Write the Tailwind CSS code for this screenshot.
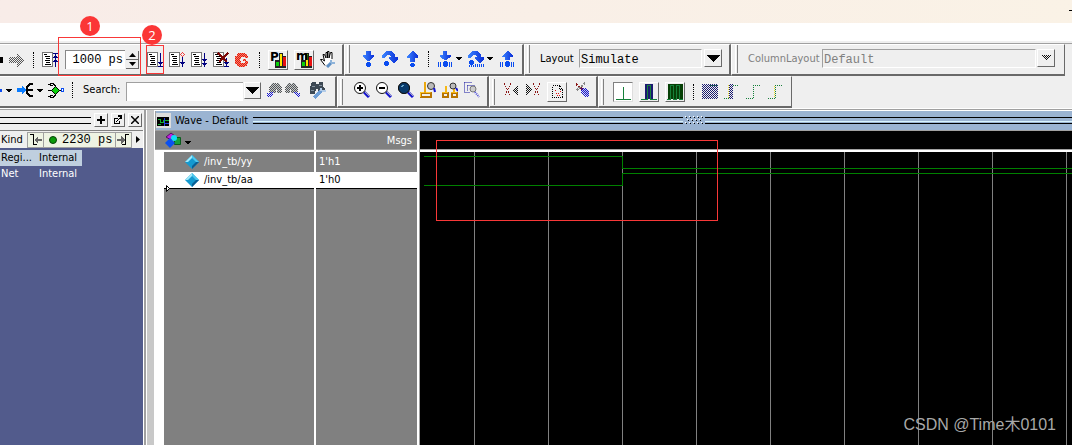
<!DOCTYPE html>
<html lang="en">
<head>
<meta charset="utf-8">
<title>Wave - Default</title>
<script src="https://cdn.jsdelivr.net/npm/@tailwindcss/browser@4"></script>
</head>
<body class="bg-[#efefef] font-['DejaVu_Sans_Condensed','Noto_Sans',sans-serif] text-[11px] leading-4 text-black">

<svg width="0" height="0" class="absolute" aria-hidden="true" shape-rendering="crispEdges">
  <defs>
    <pattern id="chkBlack" width="2" height="2" patternUnits="userSpaceOnUse"><path fill="#111" d="M0 0h1v1H0zM1 1h1v1H1z"/></pattern>
    <pattern id="chkGray" width="2" height="2" patternUnits="userSpaceOnUse"><path fill="#555" d="M0 0h1v1H0zM1 1h1v1H1z"/></pattern>
    <pattern id="chkNavy" width="2" height="2" patternUnits="userSpaceOnUse"><path fill="#1a1a70" d="M0 0h1v1H0zM1 1h1v1H1z"/></pattern>
    <pattern id="chkBlue" width="2" height="2" patternUnits="userSpaceOnUse"><path fill="#1515d0" d="M0 0h1v1H0zM1 1h1v1H1z"/></pattern>
    <pattern id="chkRed" width="2" height="2" patternUnits="userSpaceOnUse"><path fill="#f08070" d="M0 0h2v2H0z"/><path fill="#e81808" d="M0 0h1v1H0zM1 1h1v1H1z"/></pattern>
    <pattern id="grip" width="4" height="6" patternUnits="userSpaceOnUse"><path fill="#fff" d="M0 0h1v1H0zM2 3h1v1H2z"/><path fill="#000" d="M1 1h1v1H1zM3 4h1v1H3z"/></pattern>
    <linearGradient id="blueFill" x1="0" x2="1"><stop offset="0" stop-color="#3d86ff"/><stop offset="1" stop-color="#0a2fd8"/></linearGradient>
  </defs>
  <symbol id="page" viewBox="0 0 16 16">
    <path fill="#fff" stroke="#777" d="M.5 .5h10v14H.5z"/>
    <path stroke="#000" d="M2 2.5h3M3 4.5h5M4 6.5h4M3 8.5h5M4 10.5h4M3 12.5h6"/>
  </symbol>
  <symbol id="run" viewBox="0 0 16 16"><use href="#page"/><path fill="#000080" d="M13 1h1v13h-1zM11 10h5v1h-1v1h-1v1h-1v-1h-1v-1h-1zM11 14h5v1h-5z"/></symbol>
  <symbol id="cont" viewBox="0 0 16 16"><use href="#page"/><path fill="#000080" d="M13 5h1v10h-1zM11 10h5v1h-1v1h-1v1h-1v-1h-1v-1h-1z"/><path fill="#f04040" d="M13 0h1v1h-1zM12 1h1v1h-1zM14 1h1v1h-1zM11 2h1v1h-1zM15 2h1v1h-1zM12 3h1v1h-1zM14 3h1v1h-1zM13 4h1v1h-1z"/></symbol>
  <symbol id="runall" viewBox="0 0 16 16"><use href="#page"/><path fill="#000080" d="M13 1h1v14h-1zM11 7h5v1h-1v1h-3V8h-1zM11 11h5v1h-1v1h-1v1h-1v-1h-1v-1h-1z"/></symbol>
  <symbol id="breakx" viewBox="0 0 16 16"><use href="#page"/><path fill="#000080" d="M13 6h1v9h-1zM11 10h5v1h-1v1h-1v1h-1v-1h-1v-1h-1zM11 14h5v1h-5z"/><path fill="none" stroke="#7b0808" stroke-width="2" d="M5 1l9 9M15 1l-9 9"/></symbol>
  <symbol id="restart" viewBox="0 0 18 16"><path fill="#fff" stroke="#777" d="M.5 .5h10v14H.5z"/><path stroke="#000" d="M2 2.5h3M3 4.5h5M4 6.5h4M3 8.5h5M4 10.5h4M3 12.5h6"/><path fill="#000080" d="M13 1h1v14h-1zM11 1h6v1h-6zM12 4h3v1h-3zM11 5h5v1h-5zM12 8h3v1h-3zM11 9h5v1h-5z"/></symbol>
  <symbol id="stop" viewBox="0 0 16 16"><path fill="url(#chkRed)" d="M3 1h7v1h2v2h1v2h-3V5H6v2H5v2h1v2h4V9h3v3h-1v2h-2v1H4v-1H2v-2H0V4h2V2h1zM8 7h3v2H8z"/></symbol>
  <symbol id="meter" viewBox="0 0 18 18"><path fill="#222" d="M6 9h4V2h4v3h3v12H6z"/><path fill="#0bd00b" d="M7 11h3v4H7z"/><path fill="#ffe600" d="M11 3h2v12h-2z"/><path fill="#e81010" d="M14 6h3v9h-3z"/></symbol>
  <symbol id="hand" viewBox="0 0 16 17"><path fill="#fff" stroke="#000" d="M5 14.5L.5 8.500h2L4.500 10 3 3.500h1.500L6 7V1.500h1.500V7 .5H9V7l1.500-5.500H12V8"/><path fill="#fff" d="M5 9h7v4H6z"/><path stroke="#5d8fc4" stroke-width="3" d="M7 16l5-5"/><path stroke="#8fb4da" stroke-width="2" d="M11 12V9M11 12h4"/></symbol>
  <symbol id="down" viewBox="0 0 16 16"><path fill="url(#blueFill)" d="M6 0h5v4h3v2L9 10H8L3 6V4h3z"/><path fill="#0a4cf0" d="M7 11h3v1h1v3h-1v1H7v-1H6v-3h1z"/></symbol>
  <symbol id="up" viewBox="0 0 16 16"><path fill="url(#blueFill)" d="M8 0h1l5 5v2h-3v4H6V7H3V5z"/><path fill="#0a4cf0" d="M7 12h3v1h1v2h-1v1H7v-1H6v-2h1z"/></symbol>
  <symbol id="over" viewBox="0 0 16 16"><path fill="url(#blueFill)" d="M0 7V4l4-4h5l4 4v2h3v2l-4 4h-1L7 8V6h2L7 4H5L2 7z"/><path fill="#0a4cf0" d="M3 10h3v1h1v3H6v1H3v-1H2v-3h1z"/></symbol>
  <symbol id="downd" viewBox="0 0 16 16"><path fill="url(#blueFill)" d="M6 0h4v4h4v2L9 9H8L3 6V4h3z"/><path fill="#0a4cf0" d="M1 11h1v5H1zM3 11h1v5H3zM7 10h3v1h1v4h-1v1H7v-1H6v-4h1zM12 11h1v5h-1zM14 11h1v5h-1z"/></symbol>
  <symbol id="upd" viewBox="0 0 16 16"><path fill="url(#blueFill)" d="M8 0h1l5 5v1h-3v3H6V6H3V5z"/><path fill="#0a4cf0" d="M1 11h1v5H1zM3 11h1v5H3zM7 10h3v1h1v4h-1v1H7v-1H6v-4h1zM12 11h1v5h-1zM14 11h1v5h-1z"/></symbol>
  <symbol id="overd" viewBox="0 0 16 16"><path fill="url(#blueFill)" d="M0 7V4l4-4h5l4 4v2h3v2l-4 4h-1L7 8V6h2L7 4H5L2 7z"/><path fill="#0a4cf0" d="M2 9h3v1h1v3H5v1H2v-1H1v-3h1zM1 14h1v2H1zM3 14h1v2H3zM5 14h1v2H5zM7 13h1v3H7zM9 13h1v3H9zM11 13h1v3h-1zM13 13h1v3h-1zM15 13h1v3h-1z"/></symbol>
  <symbol id="tri" viewBox="0 0 6 3"><path d="M0 0h6v1H5v1H4v1H2V2H1V1H0z"/></symbol>
  <symbol id="bigtri" viewBox="0 0 13 7"><path d="M0 0h13v1h-1v1h-1v1h-1v1H9v1H8v1H7v1H6V6H5V5H4V4H3V3H2V2H1V1H0z"/></symbol>
  <symbol id="lens" viewBox="0 0 16 16"><path stroke="#1515d0" stroke-width="3" d="M10 10l5 5"/><path stroke="#aab" d="M11 10l4 4"/><circle cx="6" cy="6" r="5.500" fill="#fff" stroke="#111"/></symbol>
  <symbol id="zin" viewBox="0 0 16 16"><use href="#lens"/><path fill="#000" d="M5 3h2v2h2v2H7v2H5V7H3V5h2z"/></symbol>
  <symbol id="zout" viewBox="0 0 16 16"><use href="#lens"/><path fill="#000" d="M3 5h6v2H3z"/></symbol>
  <symbol id="zfull" viewBox="0 0 16 16"><use href="#lens"/><circle cx="6" cy="6" r="5.500" fill="#093a6b" stroke="#111"/><path stroke="#6aa6c8" d="M3 4.500h2M4 3.500h2"/></symbol>
  <symbol id="zcur" viewBox="0 0 16 16"><path fill="none" stroke="#b87400" stroke-width="2" d="M1 11h10v4H1z"/><path fill="none" stroke="#ffc928" d="M.5 15v-4.500h10"/><path fill="#eba80f" d="M4 0h2v11H4z"/><circle cx="11" cy="4" r="3.500" fill="#bbb" stroke="#333"/><path stroke="#1515d0" stroke-width="2" d="M14 6l1 4"/></symbol>
  <symbol id="zcur2" viewBox="0 0 16 16"><path fill="none" stroke="#b87400" stroke-width="2" d="M1 11h5v4H1zM10 11h5v4h-5z"/><path fill="#f5b818" d="M3 4h2v7H3zM11 6h2v5h-2zM0 10h6v1H0zM9 10h6v1H9z"/><circle cx="11" cy="4" r="3" fill="#bbb" stroke="#333"/><path stroke="#1515d0" stroke-width="2" d="M14 6l2 3"/></symbol>
  <symbol id="zarea" viewBox="0 0 16 16"><path fill="none" stroke="#1515a0" stroke-dasharray="1 1" d="M.5 .5h8M.5 .5v10h5M3.500 3.500h8M3.500 3.500v6"/><circle cx="9" cy="7" r="3" fill="#ccc" stroke="#777"/><path stroke="#4a4ad8" stroke-width="2" stroke-dasharray="1 1" d="M11 10l4 5"/></symbol>
  <symbol id="bino" viewBox="0 0 16 16"><path fill="#c3c9cc" d="M6 1h3l1 1 1-1h2l2 4v6h-4V7h-1v4H6l-2-1V6z"/><path fill="url(#chkGray)" d="M6 1h3l1 1 1-1h2l3 5v5h-5V7h-1v4H6l-3-1V6z"/><path fill="url(#chkBlue)" d="M4 10h3v2l-3 3H1v-3H0v-1h4z"/></symbol>
  <symbol id="drive" viewBox="0 0 16 16"><path fill="#0a7cff" d="M0 6h5V4l5 4-5 4v-2H0z"/><path fill="none" stroke="#000" stroke-width="2" d="M16 2h-3l-3 3v6l3 3h3M10 8h6"/></symbol>
  <symbol id="gates" viewBox="0 0 16 16"><path fill="none" stroke="#000" d="M0 2.500h3M0 8.500h5M0 14.500h3M10 8.500h4"/><path fill="none" stroke="#000" d="M2 1.500h3l2 2v2M2 1.500v2h3M2 15.500h3l2-2v-2M2 15.500v-2h3"/><path fill="#0bd00b" stroke="#000" d="M7.500 4.500l4 4-4 4-4-4z"/><path fill="#fff" stroke="#0a4cf0" d="M13.500 6.500h2v3h-2z"/></symbol>
  <symbol id="cut" viewBox="0 0 16 16"><path fill="none" stroke="#8b1414" stroke-dasharray="2 1" d="M1 1l7 14M8 1L1 15"/><path fill="url(#chkBlack)" d="M9 8l6-6v12z"/></symbol>
  <symbol id="diamond" viewBox="0 0 14 14"><path fill="#1499cf" d="M7 0l7 7-7 7-7-7z"/><path fill="#9de9fb" d="M7 0v3L3 7H0z"/><path fill="#4cc8ee" d="M7 0v3l4 4h3z"/><path fill="#0b5e93" d="M7 14v-3l4-4h3z"/></symbol>
</svg>

<div class="relative flex min-h-screen flex-col overflow-hidden">
  <header class="flex h-[23px] shrink-0 justify-end bg-linear-to-r from-[#f8ece8] to-[#faf2e6] pt-2.5"><span class="h-px w-[3px] bg-black"></span></header>
  <div class="h-[18px] shrink-0 bg-white"></div>
  <div class="h-0.5 shrink-0"></div>
  <div class="h-px shrink-0 bg-[#a0a0a0]"></div>

  <!-- Toolbars, first row -->
  <div class="flex h-8 shrink-0">
    <section class="flex w-[344px] shrink-0 items-center border-t border-r-2 border-b-2 border-t-white border-r-[#696969] border-b-[#696969]" aria-label="Simulate">
      <svg class="h-4 w-[3px]" shape-rendering="crispEdges"><path d="M0 5h3v6H0z"/></svg>
      <button class="ml-1.5" aria-label="Forward"><svg class="size-4" shape-rendering="crispEdges"><path fill="url(#chkGray)" d="M0 5h8V1l8 7-8 7v-4H0z"/></svg></button>
      <span class="ml-2 h-4 border-l border-dotted border-black"></span>
      <button class="ml-2" aria-label="Restart"><svg class="h-4 w-[18px]" shape-rendering="crispEdges"><use href="#restart"/></svg></button>
      <input aria-label="Run length" value="1000 ps" class="ml-[5px] h-[19px] w-[60px] border-t border-l border-[#888] bg-white pr-0.5 text-right font-['Liberation_Mono',monospace] text-[12px]">
      <div class="ml-px flex w-[13px] flex-col">
        <button aria-label="Increase" class="flex h-[9px] items-center justify-center border-r border-b border-[#696969]"><svg width="7" height="4"><path d="M0 4l3.500-4L7 4z"/></svg></button>
        <button aria-label="Decrease" class="flex h-[9px] items-center justify-center border-r border-b border-[#696969]"><svg width="7" height="4"><path d="M0 0l3.500 4L7 0z"/></svg></button>
      </div>
      <div class="ml-2 flex gap-1.5">
        <button aria-label="Run"><svg class="size-4" shape-rendering="crispEdges"><use href="#run"/></svg></button>
        <button aria-label="Continue run"><svg class="size-4" shape-rendering="crispEdges"><use href="#cont"/></svg></button>
        <button aria-label="Run all"><svg class="size-4" shape-rendering="crispEdges"><use href="#runall"/></svg></button>
        <button aria-label="Break"><svg class="size-4" shape-rendering="crispEdges"><use href="#breakx"/></svg></button>
        <button aria-label="Stop"><svg class="size-4" shape-rendering="crispEdges"><use href="#stop"/></svg></button>
      </div>
      <span class="ml-2 h-4 border-l border-dotted border-black"></span>
      <div class="ml-2 flex items-center gap-1.5">
        <button aria-label="Performance profiling" class="size-5 border border-t-white border-r-[#696969] border-b-[#696969] border-l-white"><svg class="size-[18px]" shape-rendering="crispEdges"><use href="#meter"/><text x="1" y="10" font-family="DejaVu Sans" font-weight="bold" font-size="12">P</text></svg></button>
        <button aria-label="Memory profiling" class="size-5 border border-t-white border-r-[#696969] border-b-[#696969] border-l-white"><svg class="size-[18px]" shape-rendering="crispEdges"><use href="#meter"/><text x="1" y="9" font-family="DejaVu Sans" font-weight="bold" font-size="12">m</text></svg></button>
        <button aria-label="Edit"><svg class="h-[17px] w-4"><use href="#hand"/></svg></button>
      </div>
    </section>

    <section class="flex w-[180px] shrink-0 items-center border-t border-r-2 border-b-2 border-l border-t-white border-r-[#696969] border-b-[#696969] border-l-white pb-0.5" aria-label="Step">
      <span class="ml-0.5 h-7 w-[3px] shrink-0 border-r border-l border-r-[#808080] border-l-white"></span>
      <div class="ml-2.5 flex gap-1.5">
        <button aria-label="Step into"><svg class="size-4" shape-rendering="crispEdges"><use href="#down"/></svg></button>
        <button aria-label="Step over"><svg class="size-4" shape-rendering="crispEdges"><use href="#over"/></svg></button>
        <button aria-label="Step out"><svg class="size-4" shape-rendering="crispEdges"><use href="#up"/></svg></button>
      </div>
      <span class="ml-2 h-4 border-l border-dotted border-black"></span>
      <button class="ml-2 flex items-center gap-[3px]" aria-label="Step into current"><svg class="size-4" shape-rendering="crispEdges"><use href="#downd"/></svg><svg class="h-[3px] w-1.5" shape-rendering="crispEdges"><use href="#tri"/></svg></button>
      <button class="ml-1.5 flex items-center gap-[3px]" aria-label="Step over current"><svg class="size-4" shape-rendering="crispEdges"><use href="#overd"/></svg><svg class="h-[3px] w-1.5" shape-rendering="crispEdges"><use href="#tri"/></svg></button>
      <button class="ml-1.5" aria-label="Step out current"><svg class="size-4" shape-rendering="crispEdges"><use href="#upd"/></svg></button>
    </section>

    <section class="flex w-[207px] shrink-0 items-center border-t border-r-2 border-b-2 border-l border-t-white border-r-[#696969] border-b-[#696969] border-l-white pb-0.5" aria-label="Layout">
      <span class="ml-0.5 h-7 w-[3px] shrink-0 border-r border-l border-r-[#808080] border-l-white"></span>
      <label for="layout" class="ml-2.5 w-[39px] shrink-0">Layout</label>
      <div class="relative flex">
        <select id="layout" class="h-[19px] w-[143px] appearance-none pt-0.5 pl-0.5 font-['Liberation_Mono',monospace] text-[12px] leading-4"><option>Simulate</option></select>
        <span class="pointer-events-none absolute inset-y-0 left-0 w-[123px] border border-t-[#a0a0a0] border-r-white border-b-white border-l-[#a0a0a0]"></span>
        <span class="pointer-events-none absolute top-0 right-0 flex size-[18px] items-center justify-center border border-t-white border-r-[#696969] border-b-[#696969] border-l-white"><svg class="h-[7px] w-[13px]" shape-rendering="crispEdges"><use href="#bigtri"/></svg></span>
      </div>
    </section>

    <section class="flex w-[334px] shrink-0 items-center border-t border-r border-b-2 border-l border-t-white border-r-[#696969] border-b-[#696969] border-l-white pb-0.5 text-[#808080]" aria-label="Column layout">
      <span class="ml-[3px] h-7 w-[3px] shrink-0 border-r border-l border-r-[#808080] border-l-white"></span>
      <label for="columns" class="ml-2.5 w-[74px] shrink-0">ColumnLayout</label>
      <div class="relative flex">
        <select id="columns" disabled class="h-[19px] w-[233px] appearance-none pt-0.5 pl-0.5 font-['Liberation_Mono',monospace] text-[12px] leading-4 text-[#808080]"><option>Default</option></select>
        <span class="pointer-events-none absolute inset-y-0 left-0 w-[214px] border border-t-[#a0a0a0] border-r-white border-b-white border-l-[#a0a0a0]"></span>
        <span class="pointer-events-none absolute top-0 right-0 flex size-[18px] items-center justify-center border border-t-white border-r-[#696969] border-b-[#696969] border-l-white"><svg class="h-[7px] w-[13px]" shape-rendering="crispEdges"><path fill="url(#chkBlack)" d="M1 0h11L7 6H6z"/></svg></span>
      </div>
    </section>
  </div>

  <!-- Toolbars, second row -->
  <div class="flex h-8 shrink-0">
    <section class="flex w-[337px] shrink-0 items-start border-t border-r-2 border-b-2 border-t-white border-r-[#696969] border-b-[#696969] pt-[5px]" aria-label="Search">
      <button class="flex h-4 items-center gap-1" aria-label="Trace"><svg width="2" height="3"><path fill="#0a4cf0" d="M0 0h2v3H0z"/></svg><svg class="h-[3px] w-1.5" shape-rendering="crispEdges"><use href="#tri"/></svg></button>
      <button class="ml-[5px] flex h-4 items-center gap-1" aria-label="Drivers"><svg class="size-4" shape-rendering="crispEdges"><use href="#drive"/></svg><svg class="h-[3px] w-1.5" shape-rendering="crispEdges"><use href="#tri"/></svg></button>
      <button class="ml-[5px]" aria-label="Fanout"><svg class="size-4" shape-rendering="crispEdges"><use href="#gates"/></svg></button>
      <span class="ml-2 h-4 border-l border-dotted border-black"></span>
      <label for="search" class="ml-2.5 w-[43px] shrink-0">Search:</label>
      <input id="search" class="h-[19px] w-[117px] border-t border-l border-[#a0a0a0] bg-white px-1">
      <button aria-label="Search history" class="ml-px flex size-[17px] items-center justify-center border border-t-white border-r-[#696969] border-b-[#696969] border-l-white"><svg class="h-[7px] w-[13px] shrink-0" shape-rendering="crispEdges"><use href="#bigtri"/></svg></button>
      <button class="ml-[5px]" aria-label="Find previous"><svg class="size-4" shape-rendering="crispEdges"><use href="#bino"/></svg></button>
      <button class="ml-[3px] -scale-x-100" aria-label="Find next"><svg class="size-4" shape-rendering="crispEdges"><use href="#bino"/></svg></button>
      <button class="ml-2" aria-label="Search options"><svg class="size-[17px]" shape-rendering="crispEdges"><path fill="#3d4954" d="M3 0h4v2h3V0h4v4l2 3v3H9V7H7l-1 5H1V6z"/><path stroke="#8593a0" d="M3 4h3M10 3h3M2 8h3"/><path stroke="#6f9fd6" stroke-width="4" d="M5 16l7-7"/><path stroke="#b3cce8" stroke-width="2" d="M12 9V6M13 9h4"/></svg></button>
    </section>

    <section class="flex w-[152px] shrink-0 items-start border-t border-r-2 border-b-2 border-l border-t-white border-r-[#696969] border-b-[#696969] border-l-white pt-[5px]" aria-label="Zoom">
      <span class="-mt-[3px] ml-0.5 h-[26px] w-[3px] shrink-0 border-r border-l border-r-[#808080] border-l-white"></span>
      <div class="ml-[11px] flex gap-1.5">
        <button aria-label="Zoom in"><svg class="size-4"><use href="#zin"/></svg></button>
        <button aria-label="Zoom out"><svg class="size-4"><use href="#zout"/></svg></button>
        <button aria-label="Zoom full"><svg class="size-4"><use href="#zfull"/></svg></button>
        <button aria-label="Zoom to cursor"><svg class="size-4"><use href="#zcur"/></svg></button>
        <button aria-label="Zoom between cursors"><svg class="size-4"><use href="#zcur2"/></svg></button>
        <button aria-label="Zoom area"><svg class="size-4"><use href="#zarea"/></svg></button>
      </div>
    </section>

    <section class="flex w-[109px] shrink-0 items-start border-t border-r-2 border-b-2 border-l border-t-white border-r-[#696969] border-b-[#696969] border-l-white pt-[5px]" aria-label="Contribution">
      <span class="-mt-[3px] ml-0.5 h-[26px] w-[3px] shrink-0 border-r border-l border-r-[#808080] border-l-white"></span>
      <button class="ml-2" aria-label="Previous X"><svg class="size-4" shape-rendering="crispEdges"><use href="#cut"/></svg></button>
      <button class="ml-1.5 -scale-x-100" aria-label="Next X"><svg class="size-4" shape-rendering="crispEdges"><use href="#cut"/></svg></button>
      <button class="ml-1.5 size-5 border border-t-white border-r-[#696969] border-b-[#696969] border-l-white" aria-label="Show X"><svg class="size-[18px]" shape-rendering="crispEdges"><path fill="none" stroke="#000" stroke-dasharray="1 1" d="M4.500 2.500h7l3 4v8h-10zM11.500 2.500v4h3"/><path stroke="#e01010" stroke-dasharray="1 1" d="M7 7.500h2M12 8.500h2M8 10.500h3M9 12.500h3"/></svg></button>
      <button class="ml-2" aria-label="Clear X"><svg class="size-4" shape-rendering="crispEdges"><path stroke="#8b1414" stroke-dasharray="2 1" stroke-width="2" d="M1 2l8 7"/><path stroke="#888" stroke-dasharray="2 1" stroke-width="2" d="M10 1L1 9"/><path fill="#c4c4ea" d="M7 7h3l4 3v4h-3L7 10z"/><path fill="url(#chkBlue)" d="M6 6h4l4 4v5h-4l-4-5z"/></svg></button>
    </section>

    <section class="flex w-[194px] shrink-0 items-start border-t border-r border-b-2 border-l border-t-white border-r-[#696969] border-b-[#696969] border-l-white pt-[5px]" aria-label="Cursor">
      <span class="-mt-[3px] ml-0.5 h-[26px] w-[3px] shrink-0 border-r border-l border-r-[#808080] border-l-white"></span>
      <div class="ml-[9px] flex gap-1.5">
        <button class="size-5 border border-t-[#808080] border-r-[#ddd] border-b-[#ddd] border-l-[#808080] bg-white" aria-label="Edge mode"><svg class="size-[18px]" shape-rendering="crispEdges"><path fill="none" stroke="#15803a" d="M2 16.500h15M9.500 4v12"/></svg></button>
        <button class="size-5 border border-t-white border-r-[#696969] border-b-[#696969] border-l-white" aria-label="Two cursor mode"><svg class="size-[18px]" shape-rendering="crispEdges"><path fill="#1a1a70" d="M5 1h8v15H5z"/><path fill="none" stroke="#15803a" d="M1 16.500h6.500v-14h3v14H17"/></svg></button>
        <button class="size-5 border border-t-white border-r-[#696969] border-b-[#696969] border-l-white" aria-label="Zoom mode"><svg class="size-[18px]" shape-rendering="crispEdges"><path fill="#064006" d="M2 1h15v15H2z"/><path fill="none" stroke="#15803a" d="M1 16.500h3.500v-14h3v14h3v-14h3v14H17"/></svg></button>
      </div>
      <span class="mt-0.5 ml-2 h-4 border-l border-dotted border-black"></span>
      <div class="mt-0.5 ml-2 flex gap-1.5">
        <button aria-label="Expand all"><svg class="size-4" shape-rendering="crispEdges"><path fill="url(#chkNavy)" d="M0 0h16v15H0z"/><path stroke="#15803a" stroke-dasharray="1 1" d="M8 1.500h7"/></svg></button>
        <button aria-label="Expand at cursor"><svg class="size-4" shape-rendering="crispEdges"><path fill="url(#chkNavy)" d="M5 0h4v15H5z"/><path stroke="#e8dc30" stroke-dasharray="1 1" d="M4.500 1v13"/><path fill="none" stroke="#15803a" stroke-dasharray="1 1" d="M0 14.500h6M9 1.500h6"/></svg></button>
        <button aria-label="Collapse all"><svg class="size-4" shape-rendering="crispEdges"><path fill="none" stroke="#15803a" stroke-dasharray="1 1" d="M0 14.500h7.500v-13h7"/></svg></button>
        <button aria-label="Collapse at cursor"><svg class="size-4" shape-rendering="crispEdges"><path fill="none" stroke="#15803a" stroke-dasharray="1 1" d="M0 14.500h7.500v-13h7"/><path stroke="#e8dc30" stroke-dasharray="1 1" d="M6.500 2v12"/></svg></button>
      </div>
    </section>
  </div>

  <div class="h-px shrink-0 bg-white"></div>
  <div class="h-px shrink-0 bg-[#a0a0a0]"></div>

  <main class="flex flex-1">
    <!-- Objects pane -->
    <aside class="flex w-[146px] shrink-0 flex-col border-r-2 border-r-[#a0a0a0] bg-white">
      <div class="flex h-5 items-center bg-[#efefef] pr-0.5">
        <div class="h-[7px] flex-1 border-y border-black"></div>
        <div class="ml-[3px] flex gap-[3px]">
          <button aria-label="Zoom pane" class="flex size-3.5 items-center justify-center border border-t-white border-r-[#696969] border-b-[#696969] border-l-white"><svg class="size-2" shape-rendering="crispEdges"><path d="M3 0h2v3h3v2H5v3H3V5H0V3h3z"/></svg></button>
          <button aria-label="Undock pane" class="flex size-3.5 items-center justify-center border border-t-white border-r-[#696969] border-b-[#696969] border-l-white"><svg class="size-2.5" shape-rendering="crispEdges"><path fill="none" stroke="#000" d="M5 3.500H1.500v5h5V6M3 7l5-5"/><path d="M5 0h4v4H7V2H5z"/></svg></button>
          <button aria-label="Close pane" class="flex size-3.5 items-center justify-center border border-t-white border-r-[#696969] border-b-[#696969] border-l-white"><svg class="size-2"><path stroke="#000" stroke-width="1.500" d="M0 0l8 8M8 0L0 8"/></svg></button>
        </div>
      </div>
      <div class="mr-px flex h-[18px] items-center border-t border-[#808080] bg-[#efefef]">
        <span class="w-[27px] pl-px">Kind</span>
        <div class="flex h-4 w-[105px] items-center border border-[#a0a0a0] bg-[#eef3e3]">
          <button aria-label="Previous event" class="h-full w-4 border-r border-[#a0a0a0]"><svg class="h-3.5 w-[15px]" shape-rendering="crispEdges"><path fill="none" stroke="#000" d="M2 1.500h3.500v10H9"/><path fill="#666" d="M6 7l4-4v3h4v2h-4v3z"/></svg></button>
          <span class="ml-[5px] size-2 rounded-full border border-[#064006] bg-[#0a9a0a]"></span>
          <span class="ml-[5px] flex-1 font-['Liberation_Mono',monospace] text-[12px] whitespace-pre">2230 ps</span>
          <button aria-label="Next event" class="h-full w-4 border-l border-[#a0a0a0]"><svg class="h-3.5 w-[15px]" shape-rendering="crispEdges"><path fill="none" stroke="#000" d="M6 11.500h3.500v-10H13"/><path fill="#666" d="M9 7L5 3v3H1v2h4v3z"/></svg></button>
        </div>
        <svg class="ml-1 h-[7px] w-1"><path d="M0 0l4 3.500L0 7z"/></svg>
      </div>
      <div class="mr-px flex-1 bg-[#525b8c] pt-0.5">
        <table class="w-[82px] table-fixed text-white">
          <tbody>
            <tr class="h-4 bg-[#bfcfdf] text-black"><td class="w-[38px] p-0 pl-px">Regi...</td><td class="p-0 pl-px">Internal</td></tr>
            <tr class="h-4"><td class="p-0 pl-px">Net</td><td class="p-0 pl-px">Internal</td></tr>
          </tbody>
        </table>
      </div>
    </aside>
    <div class="w-2 shrink-0 border-l border-white bg-[#c8c8c8]"></div>

    <!-- Wave window -->
    <section class="flex min-w-0 flex-1 flex-col border-t border-l border-white bg-white">
      <div class="flex h-[19px] items-center border-l border-[#a0a0a0] bg-[#9bb4d2]">
        <svg class="size-[15px]" shape-rendering="crispEdges"><path fill="#ddd" d="M0 0h15v15H0z"/><path d="M1 4h12v9H1z"/><path fill="none" stroke="#10b030" d="M2 6.500h2v3h3v-3M9 7.500h4M2 11.500h3"/><path stroke="#2040e0" d="M8 5v8M9 10.500h4"/></svg>
        <h1 class="ml-1 w-[78px] shrink-0">Wave - Default</h1>
        <div class="h-[7px] flex-[1.17] border-y border-black"><div class="h-1 border-b border-[#d8f4fc]"></div></div>
        <svg class="mx-0.5 h-[9px] w-[18px]" shape-rendering="crispEdges"><path fill="url(#grip)" d="M0 0h18v9H0z"/></svg>
        <div class="h-[7px] flex-1 border-y border-black"><div class="h-1 border-b border-[#d8f4fc]"></div></div>
      </div>
      <div class="flex flex-1 border-t border-[#a0a0a0]">
        <div class="flex w-[159px] shrink-0 flex-col">
          <div class="flex h-[19px] shrink-0 items-center border-b border-[#a0a0a0] bg-[#808080] pl-2.5">
            <svg class="size-4"><path fill="#c21fe0" stroke="#50105e" d="M1 5l5-4 4 3-4 4z"/><path fill="#15a03a" stroke="#0a5c1c" d="M9.500 5.500h6v7h-6z"/><circle cx="9" cy="6" r="3" fill="#12dcf5"/><path fill="#0a50f0" d="M0 11l5-5 5 5-5 5z"/></svg>
            <svg class="mt-1 ml-1 h-[3px] w-1.5" shape-rendering="crispEdges"><use href="#tri"/></svg>
          </div>
          <div class="mt-0.5 ml-[9px] flex flex-1 flex-col bg-[#808080]">
            <div class="flex h-5 items-center pl-[21px] text-white"><svg class="mr-[5px] size-3.5"><use href="#diamond"/></svg>/inv_tb/yy</div>
            <div class="relative flex h-[17px] items-center border-b border-black bg-white pl-[21px]"><svg class="mr-[5px] size-3.5"><use href="#diamond"/></svg>/inv_tb/aa
              <svg class="absolute -bottom-1 left-0.5 h-[7px] w-1"><path fill="#fff" stroke="#000" d="M.5 .5l3 3-3 3z"/></svg>
            </div>
          </div>
        </div>
        <div class="w-0.5 shrink-0"></div>
        <div class="flex w-[101px] shrink-0 flex-col">
          <div class="h-[19px] shrink-0 border-b border-[#a0a0a0] bg-[#808080] pr-[5px] pt-0.5 text-right leading-4 text-white">Msgs</div>
          <div class="mt-0.5 flex flex-1 flex-col bg-[#808080]">
            <div class="h-5 pl-[3px] leading-5 text-white">1'h1</div>
            <div class="h-[17px] border-b border-black bg-white pl-[3px]">1'h0</div>
          </div>
        </div>
        <div class="w-[3px] shrink-0 border-r border-[#a0a0a0]"></div>
        <div class="flex min-w-0 flex-1 flex-col bg-black">
          <div class="h-[21px] shrink-0 border-b-2 border-white"><div class="h-[19px] border-b border-[#a0a0a0]"></div></div>
          <svg class="w-full flex-1" shape-rendering="crispEdges" role="img" aria-label="Waveforms of yy and aa">
            <defs><pattern id="grid" x="54" width="74" height="10" patternUnits="userSpaceOnUse"><path fill="#808080" d="M0 0h1v10H0z"/></pattern></defs>
            <rect width="100%" height="100%" fill="url(#grid)"/>
            <path fill="none" stroke="#008000" d="M4 4.500h198.500v12H2000M4 33.500h198.500v-12H2000"/>
          </svg>
        </div>
      </div>
    </section>
  </main>

  <!-- Annotations laid over the window -->
  <div class="pointer-events-none absolute top-[37px] left-[58px] h-[39px] w-[83px] border border-[#f83838]"></div>
  <div class="pointer-events-none absolute top-[45px] left-[146px] h-[29px] w-[18px] border border-[#f83838]"></div>
  <div class="pointer-events-none absolute top-[140px] left-[436px] h-[81px] w-[282px] border border-[#f83838]"></div>
  <div class="absolute top-4 left-20 size-5 rounded-full bg-[#fb3636] text-center font-['Open_Sans',sans-serif] text-[13px] leading-5 text-white">1</div>
  <div class="absolute top-[25px] left-[142px] size-5 rounded-full bg-[#fb3636] text-center font-['Open_Sans',sans-serif] text-[13px] leading-5 text-white">2</div>
  <div class="absolute right-4 bottom-2 font-['Liberation_Sans','Noto_Sans_CJK_SC',sans-serif] text-[16px] leading-6 whitespace-nowrap text-[#a8a8a8]">CSDN @Time木0101</div>
</div>
</body>
</html>
